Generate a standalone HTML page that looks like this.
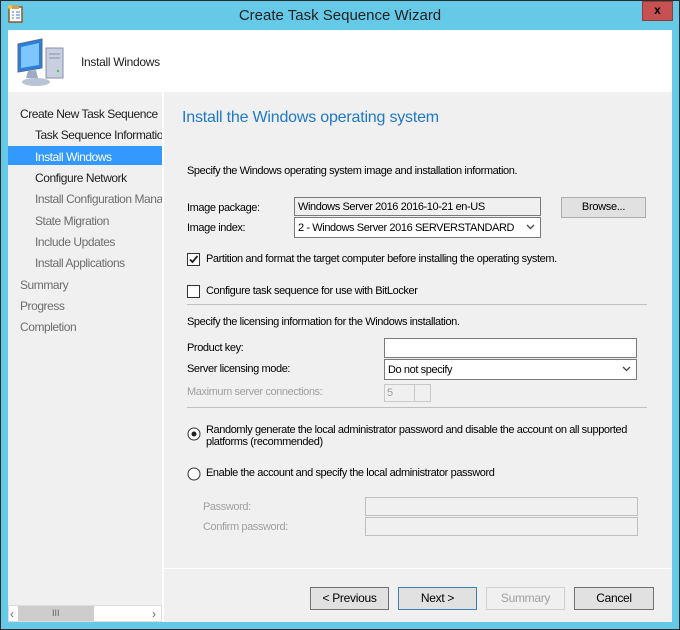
<!DOCTYPE html>
<html><head><style>
*{margin:0;padding:0;box-sizing:border-box}
body{width:680px;height:630px;background:#2b2b2b;font-family:"Liberation Sans",sans-serif;position:relative;overflow:hidden}
.a{position:absolute}
.frame{left:1px;top:1px;width:678px;height:628px;background:#66c9e8}
.t{font-size:11px;color:#000;white-space:nowrap;letter-spacing:-0.4px}
.n{font-size:12px;color:#1e1e1e;white-space:nowrap;letter-spacing:-0.45px}
.g{color:#6d6d6d}
.box{background:#fff;border:1px solid #7a7a7a}
.btn{background:#e1e1e1;border:1px solid #adadad;font-size:12px;text-align:center;line-height:21px;letter-spacing:-0.3px}
.dis{color:#a0a0a0}
</style></head><body>
<div class="a frame"></div>
<!-- title -->
<svg class="a" style="left:7px;top:4px" width="18" height="20"><rect x="2" y="3" width="13" height="15" fill="#fff" stroke="#8a5a2a" stroke-width="1.5"/><rect x="5" y="1" width="7" height="4" fill="#c9a060"/><circle cx="3" cy="3" r="2" fill="#f5c33b"/><path d="M5 8h2M9 8h4M5 11h2M9 11h4M5 14h2M9 14h4" stroke="#3a78c0"/></svg>
<div class="a" style="left:0;width:680px;top:7px;text-align:center;font-size:15px;color:#222">Create Task Sequence Wizard</div>
<div class="a" style="left:642px;top:1px;width:31px;height:20px;background:#c75050;border:1px solid #8f3c3c;color:#000;font-weight:bold;font-size:12px;text-align:center;line-height:17px">x</div>
<!-- client -->
<div class="a" style="left:8px;top:30px;width:664px;height:592px;background:#f0f0f0"></div>
<div class="a" style="left:8px;top:30px;width:664px;height:62px;background:#fff"></div>
<svg class="a" style="left:14px;top:38px" width="52" height="50"><ellipse cx="22" cy="44" rx="14" ry="4" fill="#b8c4d4"/><rect x="32" y="10" width="17" height="30" fill="#c8cfe0" stroke="#8890a8"/><path d="M35 16h11M35 20h11" stroke="#8890a8"/><circle cx="44" cy="33" r="1.2" fill="#4c4"/><path d="M4 6l24-5v29l-24 4z" fill="#2a7fd9" stroke="#5a6a90"/><path d="M7 9l18-4v22l-18 3z" fill="#7ec6ff"/><path d="M14 33l8-1 2 8h-12z" fill="#a0acc4"/></svg>
<div class="a n" style="left:81px;top:55px;font-size:12px;letter-spacing:-0.3px">Install Windows</div>
<!-- nav -->
<div class="a" style="left:8px;top:146px;width:154px;height:19px;background:#3399ff"></div>
<div class="a" style="left:162px;top:92px;width:2px;height:530px;background:#fff"></div>
<div class="a n" style="left:20px;top:107px">Create New Task Sequence</div>
<div class="a n" style="left:35px;top:128px;width:127px;overflow:hidden">Task Sequence Information</div>
<div class="a n" style="left:35px;top:150px;color:#fff">Install Windows</div>
<div class="a n" style="left:35px;top:171px">Configure Network</div>
<div class="a n g" style="left:35px;top:192px;width:127px;overflow:hidden">Install Configuration Manager</div>
<div class="a n g" style="left:35px;top:214px">State Migration</div>
<div class="a n g" style="left:35px;top:235px">Include Updates</div>
<div class="a n g" style="left:35px;top:256px">Install Applications</div>
<div class="a n g" style="left:20px;top:278px">Summary</div>
<div class="a n g" style="left:20px;top:299px">Progress</div>
<div class="a n g" style="left:20px;top:320px">Completion</div>
<!-- scrollbar -->
<div class="a" style="left:8px;top:605px;width:154px;height:17px;background:#fff;border:1px solid #ddd"></div>
<div class="a" style="left:18px;top:606px;width:76px;height:15px;background:#cdcdcd"></div>
<div class="a" style="left:10px;top:607px;font-size:12px;color:#606060">&#8249;</div>
<div class="a" style="left:152px;top:607px;font-size:12px;color:#606060">&#8250;</div>
<div class="a" style="left:52px;top:608px;font-size:9px;color:#606060">III</div>
<!-- content -->
<div class="a" style="left:182px;top:109px;font-size:16px;color:#1f78c8;letter-spacing:-0.2px">Install the Windows operating system</div>
<div class="a t" style="left:187px;top:165px">Specify the Windows operating system image and installation information.</div>
<div class="a t" style="left:187px;top:202px">Image package:</div>
<div class="a" style="left:294px;top:197px;width:247px;height:19px;background:#f0f0f0;border:1px solid #7a7a7a"></div>
<div class="a t" style="left:298px;top:201px">Windows Server 2016 2016-10-21 en-US</div>
<div class="a btn" style="left:561px;top:197px;width:85px;height:21px;font-size:11px;line-height:19px">Browse...</div>
<div class="a t" style="left:187px;top:222px">Image index:</div>
<div class="a box" style="left:294px;top:217px;width:247px;height:21px"></div>
<div class="a t" style="left:298px;top:222px">2 - Windows Server 2016 SERVERSTANDARD</div>
<svg class="a" style="left:526px;top:224px" width="9" height="6"><path d="M1 1l3.5 3.5L8 1" stroke="#444" stroke-width="1.3" fill="none"/></svg>
<div class="a box" style="left:187px;top:253px;width:13px;height:13px;border-color:#333"></div>
<svg class="a" style="left:188px;top:254px" width="11" height="11"><path d="M2 5.5l2.5 2.5L9.5 2" stroke="#222" stroke-width="1.8" fill="none"/></svg>
<div class="a t" style="left:206px;top:253px">Partition and format the target computer before installing the operating system.</div>
<div class="a box" style="left:187px;top:285px;width:13px;height:13px;border-color:#333"></div>
<div class="a t" style="left:206px;top:285px">Configure task sequence for use with BitLocker</div>
<div class="a" style="left:187px;top:304px;width:460px;height:1px;background:#c0c0c0"></div>
<div class="a t" style="left:187px;top:316px">Specify the licensing information for the Windows installation.</div>
<div class="a t" style="left:187px;top:342px">Product key:</div>
<div class="a box" style="left:384px;top:338px;width:253px;height:20px"></div>
<div class="a t" style="left:187px;top:363px">Server licensing mode:</div>
<div class="a box" style="left:384px;top:359px;width:253px;height:21px"></div>
<div class="a t" style="left:388px;top:364px">Do not specify</div>
<svg class="a" style="left:622px;top:366px" width="9" height="6"><path d="M1 1l3.5 3.5L8 1" stroke="#444" stroke-width="1.3" fill="none"/></svg>
<div class="a t dis" style="left:187px;top:386px">Maximum server connections:</div>
<div class="a" style="left:384px;top:384px;width:47px;height:18px;border:1px solid #c8c8c8;background:#f0f0f0"></div>
<div class="a t dis" style="left:387px;top:387px">5</div>
<div class="a" style="left:414px;top:385px;width:1px;height:16px;background:#c8c8c8"></div>
<div class="a" style="left:187px;top:407px;width:460px;height:1px;background:#c0c0c0"></div>
<svg class="a" style="left:187px;top:427px" width="14" height="14"><circle cx="7" cy="7" r="6" fill="#fff" stroke="#333"/><circle cx="7" cy="7" r="2.5" fill="#222"/></svg>
<div class="a t" style="left:206px;top:424px;line-height:12px">Randomly generate the local administrator password and disable the account on all supported<br>platforms (recommended)</div>
<svg class="a" style="left:187px;top:467px" width="14" height="14"><circle cx="7" cy="7" r="6" fill="#fff" stroke="#333"/></svg>
<div class="a t" style="left:206px;top:467px">Enable the account and specify the local administrator password</div>
<div class="a t dis" style="left:203px;top:501px">Password:</div>
<div class="a" style="left:365px;top:497px;width:273px;height:19px;border:1px solid #c0c0c0;background:#f0f0f0"></div>
<div class="a t dis" style="left:203px;top:521px">Confirm password:</div>
<div class="a" style="left:365px;top:517px;width:273px;height:19px;border:1px solid #c0c0c0;background:#f0f0f0"></div>
<div class="a" style="left:164px;top:568px;width:508px;height:1px;background:#fff"></div>
<div class="a btn" style="left:310px;top:587px;width:79px;height:23px;border-color:#707070">&lt; Previous</div>
<div class="a btn" style="left:398px;top:587px;width:79px;height:23px;border-color:#3c7fb1">Next &gt;</div>
<div class="a btn" style="left:486px;top:587px;width:79px;height:23px;background:#f0f0f0;border-color:#d0d0d0;color:#a0a0a0">Summary</div>
<div class="a btn" style="left:574px;top:587px;width:80px;height:23px;border-color:#707070">Cancel</div>
</body></html>
